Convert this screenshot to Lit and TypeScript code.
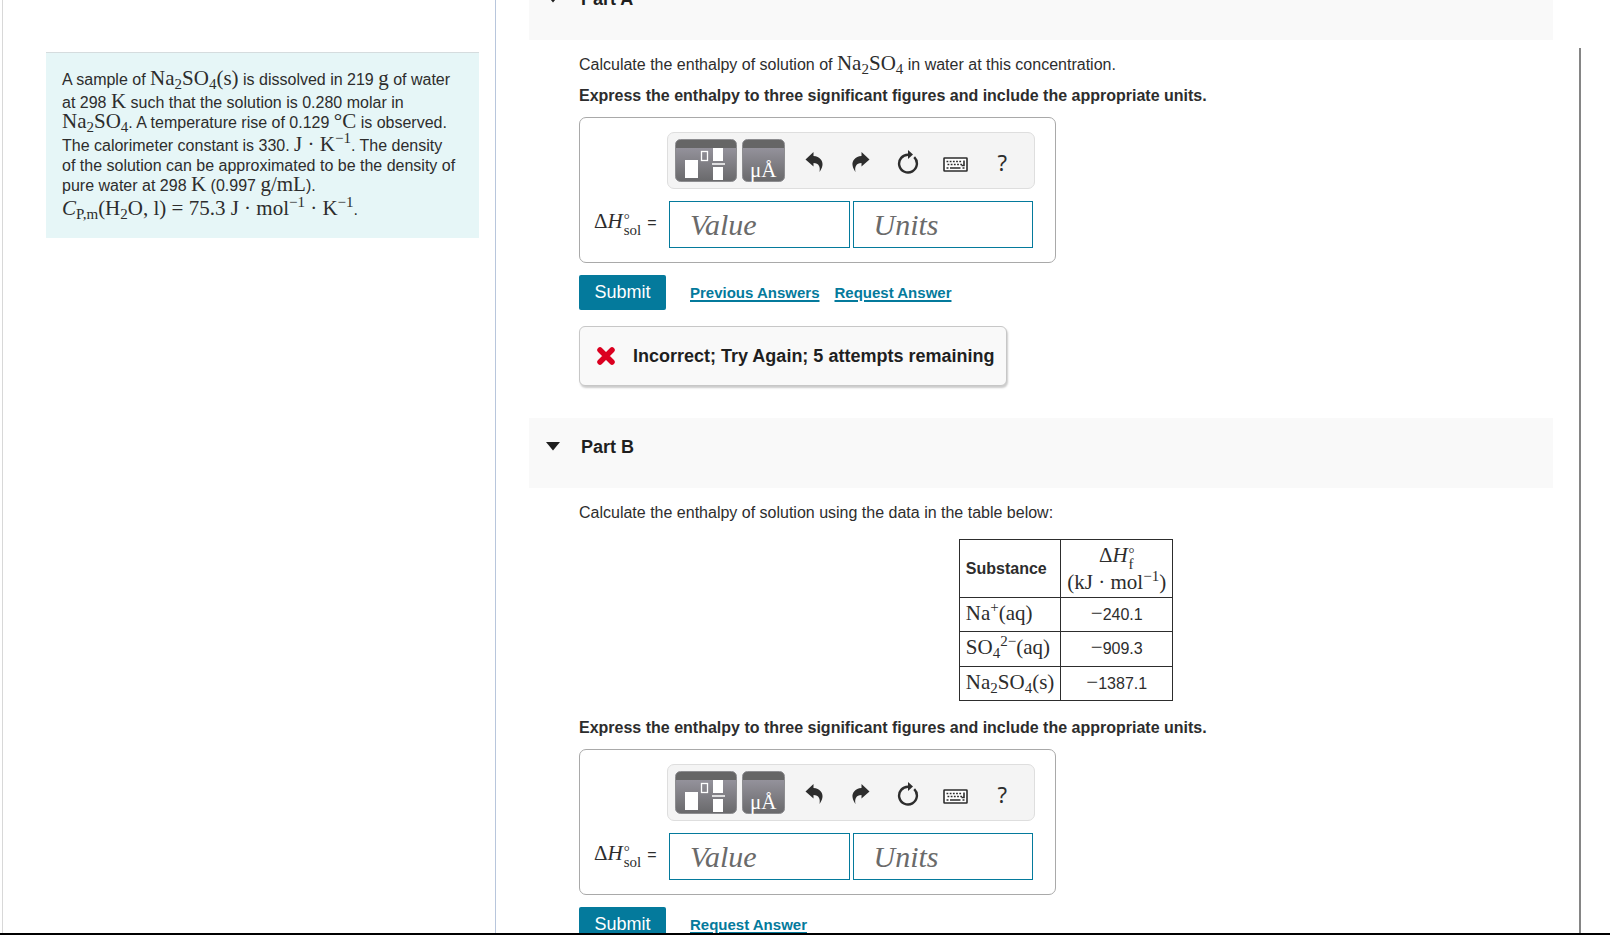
import { LitElement, html, css, svg } from "lit";
import { customElement, property } from "lit/decorators.js";

const mathStyles = css`
  .math { font: 21px/0 "Liberation Serif", "Times New Roman", serif; white-space: nowrap; }
  .math i { font-style: italic; }
  .math sub, .math sup { font-size: 15px; line-height: 0; }
  .math sub { vertical-align: -4px; }
  .math sup { vertical-align: 8px; }
  .stack { display: inline-flex; flex-direction: column; vertical-align: 4px; font-size: 15px; line-height: 11px; margin-left: 1px; text-align: left; }
`;

@customElement("answer-box")
export class AnswerBox extends LitElement {
  @property() name = "a";

  static styles = [
    mathStyles,
    css`
      :host { display: block; color: #2d2d2d; }
      .box { box-sizing: border-box; width: 477px; max-width: 100%; height: 146px; border: 1px solid #a9a9a9; border-radius: 7px;
        padding: 14px 20px 14px 14px; display: grid; grid-template-columns: 73px 1fr; row-gap: 12px; align-items: center; }
      .toolbar { grid-column: 2; box-sizing: border-box; height: 57px; border: 1px solid #dedede; border-radius: 7px; background: #f4f4f4;
        padding: 0 8px 0 7px; display: flex; align-items: center; }
      button { border: 0; padding: 0; background: none; color: #2d2d2d; display: block; }
      svg { display: block; }
      .tool { margin-right: 5px; }
      .icons { flex: 1; display: grid; grid-template-columns: repeat(5, 1fr); justify-items: center; align-items: center; padding-top: 3px; }
      .help { font: 22px/24px "Noto Sans", sans-serif; }
      .label { line-height: 24px; white-space: nowrap; padding-bottom: 4px; }
      .eq { font: 16px "Liberation Sans", Arial, sans-serif; margin-left: 6px; }
      .fields { display: grid; grid-template-columns: 1fr 1fr; gap: 3px; padding: 0 2px; }
      input { box-sizing: border-box; width: 100%; min-width: 0; height: 47px; border: 1px solid #047a9c; border-radius: 0; margin: 0;
        padding: 0 20px; background: #fff; color: #2d2d2d; font: italic 30px "Liberation Serif", "Times New Roman", serif; }
      input::placeholder { color: #6a6a6a; opacity: 1; }
    `,
  ];

  private key(width: number, content: unknown) {
    return svg`
      <defs>
        <linearGradient id="g${width}" x1="0" y1="0" x2="0" y2="1">
          <stop offset="0.2" stop-color="#94929b"></stop>
          <stop offset="1" stop-color="#69696b"></stop>
        </linearGradient>
      </defs>
      <rect x="0.5" y="0.5" width=${width - 1} height="42" rx="5" fill="url(#g${width})" stroke="#8d8d90"></rect>
      <path d="M1 9V5.500Q1 1 5.500 1H${width - 5.5}Q${width - 1} 1 ${width - 1} 5.500V9Z" fill="#666"></path>
      ${content}`;
  }

  render() {
    return html`
      <div class="box">
        <div class="toolbar">
          <button class="tool" type="button" aria-label="Templates">
            <svg width="62" height="43" viewBox="0 0 62 43">
              ${this.key(62, svg`
                <rect x="10" y="21" width="13" height="18" fill="#fff"></rect>
                <rect x="26.500" y="12.500" width="6" height="9" fill="none" stroke="#fff" stroke-width="1.300"></rect>
                <rect x="38" y="9" width="10" height="13" fill="#fff"></rect>
                <path d="M37 25H50" stroke="#fff" stroke-width="1.500"></path>
                <rect x="38" y="28" width="10" height="13" fill="#fff"></rect>`)}
            </svg>
          </button>
          <button class="tool" type="button" aria-label="Units and symbols">
            <svg width="43" height="43" viewBox="0 0 43 43">
              ${this.key(43, svg`
                <text x="8" y="38" fill="#fff" font-size="21" font-family="Liberation Serif, serif">μÅ</text>`)}
            </svg>
          </button>
          <div class="icons">
            <button type="button" aria-label="Undo">
              <svg width="18" height="20" viewBox="0 0 18 20">
                <path d="M0.500 7.500L8.500 0V4C15 4.500 18 9 17.500 13C17.200 16 15.500 18.500 14.500 20C15.500 15 14 11 8.500 11V14.500Z" fill="#2d2d2d"></path>
              </svg>
            </button>
            <button type="button" aria-label="Redo">
              <svg width="18" height="20" viewBox="0 0 18 20">
                <path d="M17.500 7.500L9.500 0V4C3 4.500 0 9 0.500 13C0.800 16 2.500 18.500 3.500 20C2.500 15 4 11 9.500 11V14.500Z" fill="#2d2d2d"></path>
              </svg>
            </button>
            <button type="button" aria-label="Reset">
              <svg width="22" height="24" viewBox="0 0 22 24">
                <path d="M17.200 7.200A8.900 8.900 0 1 1 11.500 4.700" fill="none" stroke="#2d2d2d" stroke-width="2.400"></path>
                <path d="M11 0L16 4.500L11 9Z" fill="#2d2d2d"></path>
              </svg>
            </button>
            <button type="button" aria-label="Keyboard shortcuts">
              <svg width="25" height="19" viewBox="0 -4 25 19">
                <rect x="1" y="1" width="23" height="13" rx="0.500" fill="#fff" stroke="#2d2d2d" stroke-width="1.600"></rect>
                <path d="M3.500 4.500H19M4.500 7.500H19" stroke="#2d2d2d" stroke-width="1.600" stroke-dasharray="1.800 1.400"></path>
                <path d="M21 3.500V8.500H18.500M3.500 11H5.500M7 11H17.500M19.500 11H21.500" fill="none" stroke="#2d2d2d" stroke-width="1.600"></path>
              </svg>
            </button>
            <button class="help" type="button" aria-label="Help">?</button>
          </div>
        </div>
        <label class="math label" for="value-${this.name}"
          >Δ<i>H</i><span class="stack"><span>°</span><span>sol</span></span
          ><span class="eq">=</span></label
        >
        <div class="fields">
          <input id="value-${this.name}" type="text" placeholder="Value" />
          <input type="text" placeholder="Units" aria-label="Units" />
        </div>
      </div>
    `;
  }
}

@customElement("app-root")
export class AppRoot extends LitElement {
  static styles = [
    mathStyles,
    css`
      :host { box-sizing: border-box; display: grid; grid-template-columns: 496px minmax(0, 1fr); height: 100vh; overflow: hidden;
        border-bottom: 2px solid #000; background: #fff; color: #2d2d2d; font: 16px/20px "Liberation Sans", Arial, sans-serif; }
      .side { border-right: 1px solid #b8c6dc; border-left: 1px solid #d8d8d8; margin-left: 2px; padding: 52px 16px 0 43px; }
      .problem { background: #e6f6f7; border-top: 1px solid #d5dcde; padding: 17px 8px 18px 16px; white-space: nowrap; }
      .line { min-height: 20px; }
      .line.roomy { padding-top: 3px; }
      .line.formula { padding-top: 4px; }
      .main { display: flex; overflow: hidden; }
      .parts { flex: 1; min-width: 0; padding-left: 33px; }
      .rail { width: 2px; margin: 48px 29px 0 26px; background: #858585; }
      .part-head { box-sizing: border-box; height: 70px; background: #f9f9f9; padding: 19px 17px; display: flex; align-items: flex-start; gap: 21px; }
      .part-head svg { margin-top: 5px; }
      .part-a { margin-top: -30px; }
      .part-b { margin-top: 32px; }
      h2 { margin: 0; font-size: 18px; line-height: 20px; color: #1f1f1f; }
      .body { padding-left: 50px; }
      p { margin: 0; }
      .question { padding-top: 15px; }
      .instruct { font-weight: bold; margin: 11px 0; }
      .actions { display: flex; align-items: center; margin-top: 12px; height: 35px; gap: 15px; }
      .submit { height: 35px; width: 87px; margin-right: 9px; border: 0; border-radius: 2px; background: #047a9c; color: #fff;
        font: 18px "Liberation Sans", Arial, sans-serif; }
      a { color: #047a9c; font-size: 15px; font-weight: bold; text-underline-offset: 2px; text-decoration-thickness: 2px; }
      .feedback { box-sizing: border-box; width: fit-content; height: 60px; margin-top: 16px; padding: 0 12px 0 17px; border: 1px solid #c7c7c7;
        border-radius: 6px; background: #f9f9f9; box-shadow: 1px 2px 2px #ccc; display: flex; align-items: center; gap: 18px;
        font-size: 18px; font-weight: bold; color: #1f1f1f; }
      table { border-collapse: collapse; margin: 16px auto 17px; text-align: center; }
      th, td { box-sizing: border-box; border: 1px solid #2d2d2d; padding: 0 6px; height: 34px; }
      th:first-child { text-align: left; }
      thead th { height: 58px; font-weight: bold; }
      tbody th { font-weight: normal; }
      tbody .ion { height: 35px; }
      .unit { font-weight: normal; line-height: 25px; display: block; }
    `,
  ];

  private head(title: string, cls: string) {
    return html`
      <header class="part-head ${cls}">
        <svg width="14" height="9" viewBox="0 0 14 9"><path d="M0 0H14L7 8.500Z" fill="#1f1f1f"></path></svg>
        <h2>${title}</h2>
      </header>
    `;
  }

  render() {
    const na2so4 = html`Na<sub>2</sub>SO<sub>4</sub>`;
    const inv = html`<sup>−1</sup>`;
    const minus = html`<span class="math">−</span>`;
    const instruct = "Express the enthalpy to three significant figures and include the appropriate units.";
    return html`
      <aside class="side">
        <div class="problem">
          <div class="line">A sample of <span class="math">${na2so4}(s)</span> is dissolved in 219 <span class="math">g</span> of water</div>
          <div class="line roomy">at 298 <span class="math">K</span> such that the solution is 0.280 molar in</div>
          <div class="line"><span class="math">${na2so4}</span>. A temperature rise of 0.129 <span class="math">°C</span> is observed.</div>
          <div class="line roomy">The calorimeter constant is 330. <span class="math">J · K${inv}</span>. The density</div>
          <div class="line">of the solution can be approximated to be the density of</div>
          <div class="line">pure water at 298 <span class="math">K</span> (0.997 <span class="math">g/mL</span>).</div>
          <div class="line formula"><span class="math"><i>C</i><sub>P,m</sub>(H<sub>2</sub>O, l) = 75.3 J · mol${inv} · K${inv}</span>.</div>
        </div>
      </aside>
      <main class="main">
        <div class="parts">
          ${this.head("Part A", "part-a")}
          <section class="body">
            <p class="question">Calculate the enthalpy of solution of <span class="math">${na2so4}</span> in water at this concentration.</p>
            <p class="instruct">${instruct}</p>
            <answer-box name="a"></answer-box>
            <div class="actions">
              <button class="submit" type="button">Submit</button>
              <a href="#previous">Previous Answers</a>
              <a href="#request-a">Request Answer</a>
            </div>
            <div class="feedback" role="status">
              <svg width="18" height="18" viewBox="0 0 18 18"><path d="M3 3L15 15M15 3L3 15" stroke="#db0020" stroke-width="5.500" stroke-linecap="round"></path></svg>
              <span>Incorrect; Try Again; 5 attempts remaining</span>
            </div>
          </section>
          ${this.head("Part B", "part-b")}
          <section class="body">
            <p class="question">Calculate the enthalpy of solution using the data in the table below:</p>
            <table>
              <thead>
                <tr>
                  <th scope="col">Substance</th>
                  <th scope="col">
                    <span class="math unit">Δ<i>H</i><span class="stack"><span>°</span><span>f</span></span></span>
                    <span class="math unit">(kJ · mol${inv})</span>
                  </th>
                </tr>
              </thead>
              <tbody>
                <tr><th scope="row"><span class="math">Na<sup>+</sup>(aq)</span></th><td>${minus}240.1</td></tr>
                <tr><th scope="row" class="ion"><span class="math">SO<sub>4</sub><sup>2−</sup>(aq)</span></th><td>${minus}909.3</td></tr>
                <tr><th scope="row"><span class="math">${na2so4}(s)</span></th><td>${minus}1387.1</td></tr>
              </tbody>
            </table>
            <p class="instruct">${instruct}</p>
            <answer-box name="b"></answer-box>
            <div class="actions">
              <button class="submit" type="button">Submit</button>
              <a href="#request-b">Request Answer</a>
            </div>
          </section>
        </div>
        <div class="rail"></div>
      </main>
    `;
  }
}
